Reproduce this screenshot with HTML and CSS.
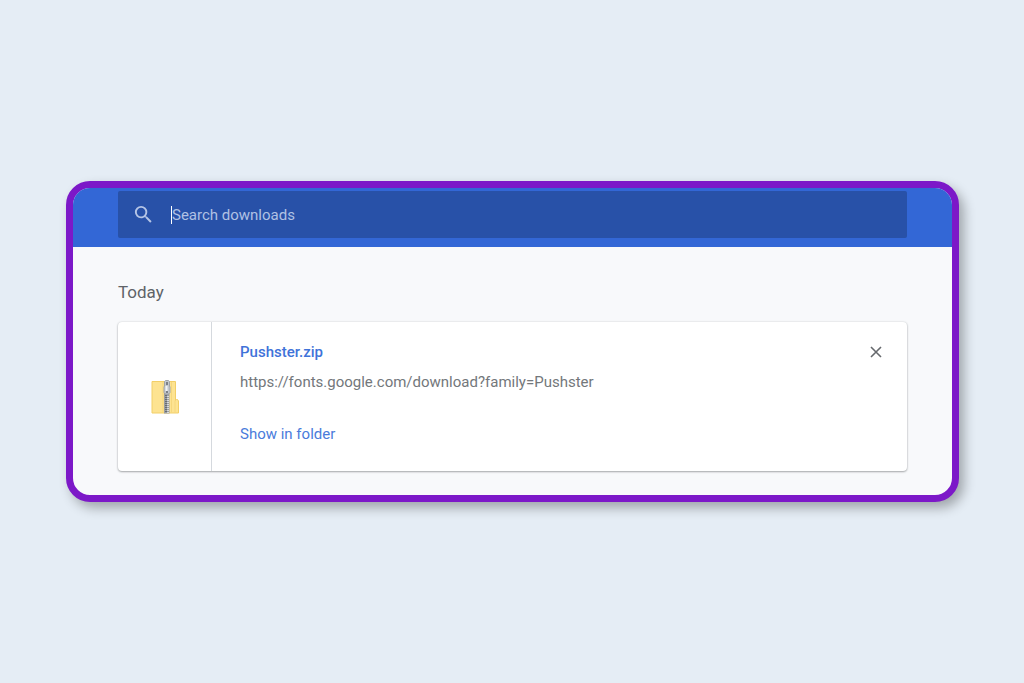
FILE: index.html
```html
<!DOCTYPE html>
<html lang="en">
<head>
    <meta charset="UTF-8">
    <meta name="viewport" content="width=device-width, initial-scale=1.0">
    <title>Downloads</title>
    <link rel="stylesheet" href="styles.css">
</head>
<body>
    <main class="window">
        <header class="toolbar">
            <form class="search" role="search">
                <label class="search-label" for="search" aria-label="Search downloads">
                    <svg class="search-icon" viewBox="0 0 24 24" aria-hidden="true">
                        <path d="M15.5 14h-.79l-.28-.27A6.47 6.47 0 0 0 16 9.5 6.5 6.5 0 1 0 9.5 16c1.61 0 3.09-.59 4.23-1.57l.27.28v.79l5 4.99L20.49 19l-4.99-5zm-6 0a4.5 4.5 0 1 1 0-9 4.5 4.5 0 0 1 0 9z"/>
                    </svg>
                </label>
                <input class="search-input" id="search" type="text" placeholder="Search downloads">
            </form>
        </header>

        <section class="content">
            <h2 class="date">Today</h2>
            <article class="card">
                <div class="file-icon">
                    <svg class="zip" viewBox="0 0 28 36" aria-hidden="true">
                        <path fill="#fde391" stroke="#f2cf68" d="M1 2.500h23.500v19l1-1h1l1 1.500v12H1z"/>
                        <path fill="none" stroke="#f5d77c" d="M12 3v31M20.500 3v31M24 21.500v12"/>
                        <path fill="#9b9fa2" d="M13 14h5.500v20.500H13z"/>
                        <path stroke="#686c70" stroke-width="2" stroke-dasharray="1 1" d="M15 16v18"/>
                        <path stroke="#d8dadc" stroke-width="2" stroke-dasharray="1 1" d="M17 17v17"/>
                        <path fill="#c3c8cd" stroke="#a0a5aa" d="M13.500 2.500l1-1h3l1 1v5h.5v6l-1.500 1.500h-3L13 13.500v-6h.5z"/>
                        <path fill="#f2f3f5" d="M14.500 7h2v5h-2z"/>
                        <path fill="#7c8187" d="M15 3h2v3h-2zM15 12h2v2h-2z"/>
                    </svg>
                </div>
                <div class="details">
                    <div class="title-row">
                        <a class="file-name" href="#">Pushster.zip</a>
                        <button class="remove" type="button" aria-label="Remove from list">
                            <svg class="remove-icon" viewBox="0 0 12 12" aria-hidden="true">
                                <path d="M1 1l10 10M11 1L1 11"/>
                            </svg>
                        </button>
                    </div>
                    <div class="url">https://fonts.google.com/download?family=Pushster</div>
                    <button class="show" type="button">Show in folder</button>
                </div>
            </article>
        </section>
    </main>
</body>
</html>
```
FILE: styles.css
```css
* {
    box-sizing: border-box;
}
body {
    display: flex;
    align-items: center;
    min-height: 100vh;
    margin: 0;
    padding: 0 65px 0 66px;
    background-color: #e5edf5;
    font-family: Roboto, Arial, sans-serif;
    font-size: 15px;
    line-height: 20px;
    color: #5f6368;
}
.window {
    width: 100%;
    overflow: hidden;
    background-color: #f8f9fb;
    border: 7px solid #7c18c8;
    border-radius: 24px;
    box-shadow: 5px 6px 12px rgba(0, 0, 0, 0.3);
}
.toolbar {
    padding: 3px 45px 9px;
    background-color: #3367d6;
}
.search {
    display: flex;
    align-items: center;
    height: 47px;
    padding: 0 14px;
    background-color: #2851a8;
    border-radius: 2px;
}
.search-label {
    display: flex;
    margin-right: 16px;
}
.search-icon {
    width: 23px;
    height: 23px;
    fill: #b5c5e6;
}
.search-input {
    flex: 1;
    height: 18px;
    padding: 0;
    border: 0;
    border-left: 1px solid #fff;
    outline: none;
    background: none;
    color: #fff;
    font: inherit;
}
.search-input::placeholder {
    color: #b0c1e4;
    opacity: 1;
}
.content {
    padding: 35px 45px 24px;
}
.date {
    margin: 0 0 20px;
    font-size: 17px;
    font-weight: 400;
    line-height: 20px;
}
.card {
    display: flex;
    background-color: #fff;
    border-radius: 4px;
    box-shadow: 0 1px 2px rgba(60, 64, 67, 0.4), 0 0 2px rgba(60, 64, 67, 0.2);
}
.file-icon {
    display: flex;
    align-items: center;
    justify-content: center;
    width: 94px;
    border-right: 1px solid #d5d9de;
}
.zip {
    width: 28px;
    height: 36px;
}
.details {
    flex: 1;
    padding: 20px 25px 27px 28px;
}
.title-row {
    display: flex;
    align-items: center;
    justify-content: space-between;
    margin-bottom: 10px;
}
.file-name {
    color: #3f73d9;
    font-weight: 500;
    text-decoration: none;
}
.remove {
    display: flex;
    padding: 0;
    border: 0;
    background: none;
    cursor: pointer;
}
.remove-icon {
    width: 12px;
    height: 12px;
    fill: none;
    stroke: #66696d;
    stroke-width: 1.6;
}
.url {
    margin-bottom: 32px;
    color: #73777b;
    overflow-wrap: anywhere;
}
.show {
    display: block;
    padding: 0;
    border: 0;
    background: none;
    color: #4a7bdb;
    font: inherit;
    cursor: pointer;
}
```
